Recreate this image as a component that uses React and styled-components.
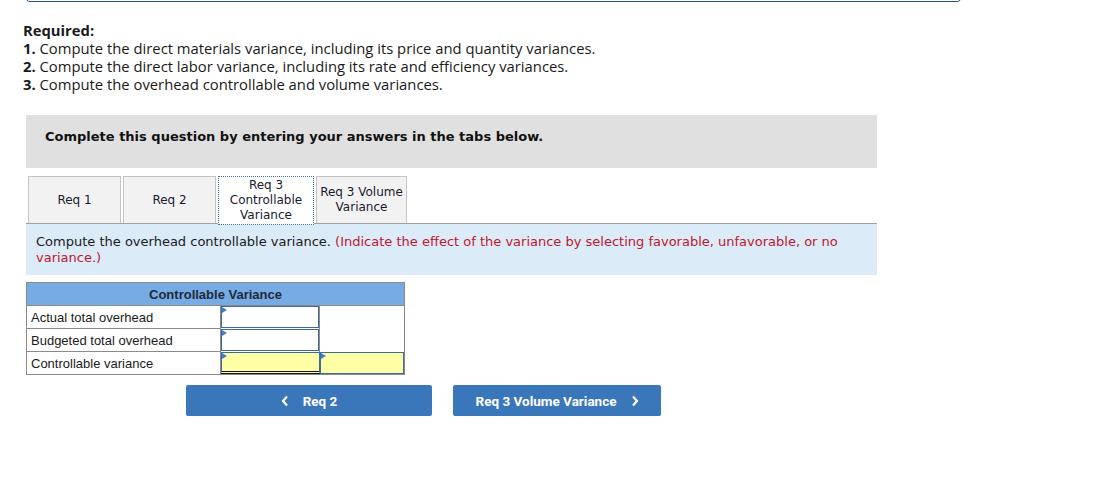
import styled, { createGlobalStyle } from 'styled-components';

const GlobalStyle = createGlobalStyle`
  body {
    margin: 0;
    background: #fff;
    font-family: "Open Sans", "Liberation Sans", sans-serif;
    color: #111;
  }
`;

const tabs = [
  { id: 1, label: 'Req 1' },
  { id: 2, label: 'Req 2' },
  { id: 3, label: 'Req 3\nControllable\nVariance', active: true },
  { id: 4, label: 'Req 3 Volume\nVariance' },
];

const rows = [
  { label: 'Actual total overhead' },
  { label: 'Budgeted total overhead' },
  { label: 'Controllable variance', total: true },
];

const App = () => {
  return (
    <>
      <GlobalStyle />
      <StyledPage>
        <StyledTopEdge />
        <StyledRequired>
          <strong>Required:</strong>
          <p><b>1.</b> Compute the direct materials variance, including its price and quantity variances.</p>
          <p><b>2.</b> Compute the direct labor variance, including its rate and efficiency variances.</p>
          <p><b>3.</b> Compute the overhead controllable and volume variances.</p>
        </StyledRequired>

        <StyledInstruction>
          Complete this question by entering your answers in the tabs below.
        </StyledInstruction>

        <StyledTabBar>
          {tabs.map((tab) => (
            <StyledTab key={tab.id} $active={tab.active}>
              {tab.label}
            </StyledTab>
          ))}
        </StyledTabBar>

        <StyledPrompt>
          Compute the overhead controllable variance.{' '}
          <span>
            (Indicate the effect of the variance by selecting favorable, unfavorable, or no
            variance.)
          </span>
        </StyledPrompt>

        <StyledTable>
          <colgroup>
            <col style={{ width: 194 }} />
            <col style={{ width: 99 }} />
            <col style={{ width: 85 }} />
          </colgroup>
          <thead>
            <tr>
              <StyledHead colSpan={3}>Controllable Variance</StyledHead>
            </tr>
          </thead>
          <tbody>
            {rows.map((row, i) => (
              <tr key={row.label}>
                <StyledLabel>{row.label}</StyledLabel>
                <StyledInputCell>
                  <StyledInput $total={row.total} />
                </StyledInputCell>
                {row.total ? (
                  <StyledInputCell>
                    <StyledInput $total $select />
                  </StyledInputCell>
                ) : (
                  i === 0 && <StyledBlank rowSpan={2} />
                )}
              </tr>
            ))}
          </tbody>
        </StyledTable>

        <StyledNav>
          <StyledNavButton $width={246}>
            <Chevron dir='left' />
            Req 2
          </StyledNavButton>
          <StyledNavButton $width={208}>
            Req 3 Volume Variance
            <Chevron dir='right' />
          </StyledNavButton>
        </StyledNav>
      </StyledPage>
    </>
  );
};

const Chevron = ({ dir }) => (
  <svg width='8' height='12' viewBox='0 0 8 12'>
    <path
      d={dir === 'left' ? 'M6 1.5 L2 6 L6 10.5' : 'M2 1.5 L6 6 L2 10.5'}
      fill='none'
      stroke='#fff'
      strokeWidth='2.2'
    />
  </svg>
);

const StyledPage = styled.div`
  width: 1099px;
  padding-left: 26px;
  box-sizing: border-box;
`;

const StyledTopEdge = styled.div`
  width: 937px;
  height: 10px;
  margin: -8px 0 0 -1px;
  border: 1.5px solid #2d4f7c;
  border-radius: 0 0 5px 5px;
  box-sizing: border-box;
`;

const StyledRequired = styled.div`
  margin: 19px 0 0 -3px;
  font-size: 14.8px;
  line-height: 18px;
  color: #1a1a1a;

  strong {
    display: block;
    font-weight: 700;
  }

  p {
    margin: 0;
  }

  b {
    font-weight: 700;
  }
`;

const StyledInstruction = styled.div`
  width: 851px;
  height: 53px;
  margin-top: 22px;
  padding: 14px 19px 0;
  box-sizing: border-box;
  background: #e0e0e0;
  font-family: "DejaVu Sans", Verdana, sans-serif;
  font-weight: 700;
  font-size: 13px;
  line-height: 16px;
  color: #111;
`;

const StyledTabBar = styled.div`
  width: 851px;
  display: flex;
  gap: 2px;
  margin-top: 8px;
  padding-left: 2px;
  box-sizing: border-box;
  border-bottom: 1.5px solid #a0a0a0;
`;

const StyledTab = styled.div`
  width: ${(p) => (p.$active ? '96px' : '93px')};
  height: ${(p) => (p.$active ? '48.5px' : '47px')};
  box-sizing: border-box;
  display: flex;
  align-items: center;
  justify-content: center;
  text-align: center;
  white-space: pre-line;
  font-family: "DejaVu Sans", Verdana, sans-serif;
  font-size: 12px;
  line-height: 15px;
  color: #1a1a2e;
  background: ${(p) => (p.$active ? '#fff' : '#f2f2f2')};
  border: ${(p) => (p.$active ? '1.5px dotted #3b6fb0' : '1px solid #c4c4c4')};
  border-bottom: ${(p) => (p.$active ? '1.5px dotted #3b6fb0' : 'none')};
  margin-bottom: ${(p) => (p.$active ? '-1.5px' : '0')};

  &:last-child {
    width: 91px;
  }
`;

const StyledPrompt = styled.div`
  width: 851px;
  height: 51px;
  padding: 10px 10px 0;
  box-sizing: border-box;
  background: #dcebf8;
  font-family: "DejaVu Sans", Verdana, sans-serif;
  font-size: 13px;
  line-height: 16px;
  color: #1a1a1a;

  span {
    color: #c0162c;
  }
`;

const StyledTable = styled.table`
  width: 378px;
  margin-top: 7px;
  table-layout: fixed;
  border-collapse: collapse;
  font-family: "Liberation Sans", Arial, sans-serif;
  font-size: 13px;
  border: 1px solid #8a8a8a;

  td,
  th {
    padding: 0;
  }
`;

const StyledHead = styled.th`
  height: 22px;
  background: #77abe3;
  border-bottom: 1px solid #8a8a8a;
  font-size: 13px;
  font-weight: 700;
  color: #1e2a3a;
  text-align: center;
`;

const StyledLabel = styled.td`
  height: 22px;
  padding-left: 4px !important;
  border: 1px solid #8a8a8a;
  color: #1a1a1a;
  white-space: nowrap;
`;

const StyledInputCell = styled.td`
  height: 22px;
  vertical-align: top;
`;

const StyledInput = styled.div`
  position: relative;
  height: 22px;
  box-sizing: border-box;
  background: ${(p) => (p.$total ? '#ffffa6' : '#fff')};
  border: 1.5px solid #3e6a9e;
  border-bottom: ${(p) => (p.$total && !p.$select ? '3px double #111' : '1.5px solid #3e6a9e')};

  &::before {
    content: '';
    position: absolute;
    left: 0;
    top: 0;
    border-top: 3px solid transparent;
    border-bottom: 3px solid transparent;
    border-left: 5px solid #3d7fd6;
  }
`;

const StyledBlank = styled.td`
  background: #fff;
  border-left: 1px solid #8a8a8a;
`;

const StyledNav = styled.div`
  display: flex;
  gap: 21px;
  margin: 10px 0 0 160px;
`;

const StyledNavButton = styled.button`
  width: ${(p) => p.$width}px;
  height: 31px;
  display: flex;
  align-items: center;
  justify-content: center;
  gap: 14px;
  border: none;
  border-radius: 2px;
  background: #3a77ba;
  color: #fff;
  font-family: Roboto, "Liberation Sans", sans-serif;
  font-size: 13.5px;
  font-weight: 700;
  cursor: pointer;
`;

export default App;
